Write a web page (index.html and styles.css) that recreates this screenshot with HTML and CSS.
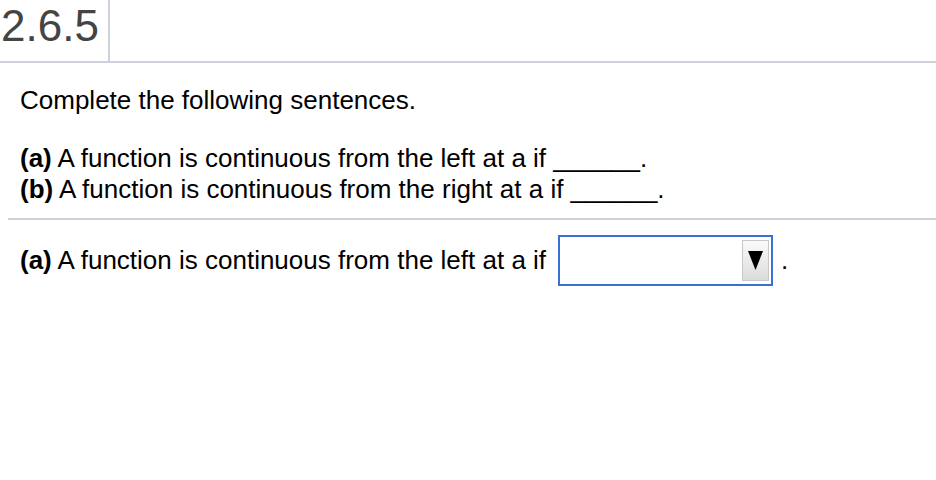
FILE: index.html
```html
<!DOCTYPE html>
<html lang="en">
<head>
    <meta charset="UTF-8">
    <title>2.6.5</title>
    <link rel="stylesheet" href="styles.css">
</head>
<body>
    <div class="header">
        <div class="section-no">2.6.5</div>
    </div>

    <div class="question">
        <p class="prompt">Complete the following sentences.</p>
        <div class="parts">
            <div class="part"><b>(a)</b> A function is continuous from the left at a if ______.</div>
            <div class="part"><b>(b)</b> A function is continuous from the right at a if ______.</div>
        </div>
    </div>

    <div class="answer">
        <div class="answer-row">
            <span><b>(a)</b> A function is continuous from the left at a if</span>
            <div class="dropdown">
                <span class="dropdown-btn">
                    <svg width="15" height="19" viewBox="0 0 15 19"><polygon points="0,0 15,0 7.5,19" fill="#000"/></svg>
                </span>
            </div>
            <span class="dot">.</span>
        </div>
    </div>
</body>
</html>
```

FILE: styles.css
```css
body {
    font-family: 'Liberation Sans', Arial, sans-serif;
    color: #000;
    background: #fff;
    margin: 0;
}
.header {
    display: flex;
    height: 61px;
    border-bottom: 2px solid #cdd1dc;
}
.section-no {
    font-size: 44px;
    color: #444;
    padding: 1px 9px 0 1px;
    border-right: 2px solid #cdd1dc;
    line-height: 50px;
}
.question {
    padding: 0 0 13px 20px;
    font-size: 26px;
}
.prompt {
    margin: 0;
    padding-top: 22px;
    line-height: 30px;
}
.parts {
    margin-top: 28px;
}
.part {
    line-height: 31px;
}
.answer {
    margin-left: 8px;
    border-top: 2px solid #cdd1dc;
    padding: 15px 0 0 12px;
    font-size: 26px;
}
.answer-row {
    display: flex;
    align-items: center;
    gap: 12px;
}
.dot {
    margin-left: -4px;
}
.dropdown {
    width: 209px;
    height: 47px;
    border: 2px solid #3a6fd3;
    display: flex;
    justify-content: flex-end;
    align-items: center;
    padding-right: 2px;
    box-sizing: content-box;
}
.dropdown-btn {
    width: 25px;
    height: 39px;
    border: 1px solid #c8c8c8;
    background: linear-gradient(#fafafa, #dcdcdc);
    display: flex;
    align-items: center;
    justify-content: center;
}
```
